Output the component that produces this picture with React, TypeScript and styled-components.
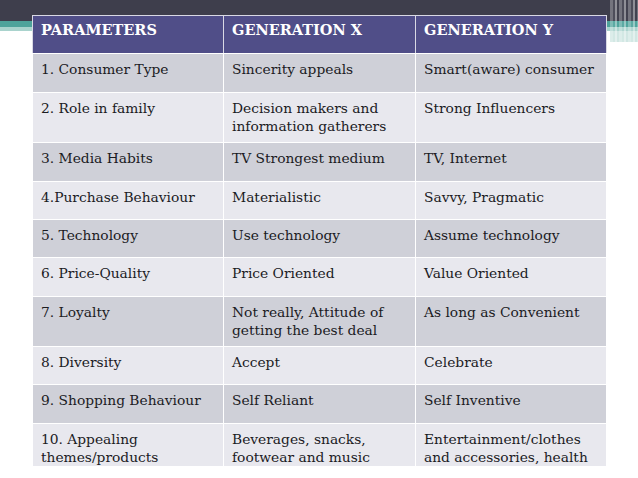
import React from "react";
import styled, { createGlobalStyle } from "styled-components";

const GlobalStyle = createGlobalStyle`
  html, body {
    margin: 0;
    padding: 0;
    background: #ffffff;
  }
  body {
    font-family: "DejaVu Serif", "Liberation Serif", serif;
  }
`;

type Row = { h: number; cells: [string, string, string] };

const rows: Row[] = [
  { h: 39, cells: ["1. Consumer Type", "Sincerity appeals", "Smart(aware) consumer"] },
  { h: 50, cells: ["2. Role in family", "Decision makers and information gatherers", "Strong Influencers"] },
  { h: 39, cells: ["3. Media Habits", "TV Strongest medium", "TV, Internet"] },
  { h: 38, cells: ["4.Purchase Behaviour", "Materialistic", "Savvy, Pragmatic"] },
  { h: 38, cells: ["5. Technology", "Use technology", "Assume technology"] },
  { h: 39, cells: ["6. Price-Quality", "Price Oriented", "Value Oriented"] },
  { h: 50, cells: ["7. Loyalty", "Not really, Attitude of getting the best deal", "As long as Convenient"] },
  { h: 38, cells: ["8. Diversity", "Accept", "Celebrate"] },
  { h: 39, cells: ["9. Shopping Behaviour", "Self Reliant", "Self Inventive"] },
  { h: 43, cells: ["10. Appealing themes/products", "Beverages, snacks, footwear and music", "Entertainment/clothes and accessories, health"] },
];

export default function App() {
  return (
    <>
      <GlobalStyle />
      <Slide>
        <Table>
          <colgroup>
            <col style={{ width: 191 }} />
            <col style={{ width: 192 }} />
            <col style={{ width: 191 }} />
          </colgroup>
          <thead>
            <tr>
              <HeadCell>PARAMETERS</HeadCell>
              <HeadCell>GENERATION X</HeadCell>
              <HeadCell>GENERATION Y</HeadCell>
            </tr>
          </thead>
          <tbody>
            {rows.map((r, i) => (
              <BodyRow key={i} $h={r.h} $dark={i % 2 === 0}>
                {r.cells.map((c, j) => (
                  <Cell key={j}>{c}</Cell>
                ))}
              </BodyRow>
            ))}
          </tbody>
        </Table>
      </Slide>
    </>
  );
}

const Slide = styled.div`
  width: 638px;
  height: 478px;
  box-sizing: border-box;
  padding: 15px 0 0 32px;
  overflow: hidden;
  background:
    repeating-linear-gradient(
        90deg,
        rgba(255, 255, 255, 0.28) 0 3px,
        rgba(255, 255, 255, 0.08) 3px 5px,
        rgba(255, 255, 255, 0.42) 5px 7px,
        rgba(255, 255, 255, 0.02) 7px 9px
      )
      610px 0 / 28px 42px no-repeat,
    linear-gradient(
        180deg,
        #3e3e4c 0 21px,
        #4ea39b 21px 27px,
        #a9d3cd 27px 31px,
        transparent 31px
      )
      0 0 / 100% 31px no-repeat,
    linear-gradient(180deg, transparent 31px, #cfe6e2 31px 42px, transparent 42px)
      610px 0 / 28px 42px no-repeat,
    #ffffff;
`;

const Table = styled.table`
  width: 575px;
  border-collapse: collapse;
  table-layout: fixed;
  font-size: 13.8px;
  line-height: 18px;
  color: #1b1b1f;
`;

const HeadCell = styled.th`
  height: 38px;
  box-sizing: border-box;
  padding: 5px 8px 0;
  vertical-align: top;
  text-align: left;
  background: #504e88;
  color: #ffffff;
  font-weight: bold;
  font-size: 14.5px;
  border: 1.5px solid #d9d9e4;
  border-bottom-color: #ffffff;
`;

const BodyRow = styled.tr<{ $h: number; $dark: boolean }>`
  height: ${(p) => p.$h}px;
  background: ${(p) => (p.$dark ? "#cfd0d8" : "#e8e8ee")};
`;

const Cell = styled.td`
  box-sizing: border-box;
  padding: 6px 8px 0;
  vertical-align: top;
  border: 1.5px solid #ffffff;
`;
